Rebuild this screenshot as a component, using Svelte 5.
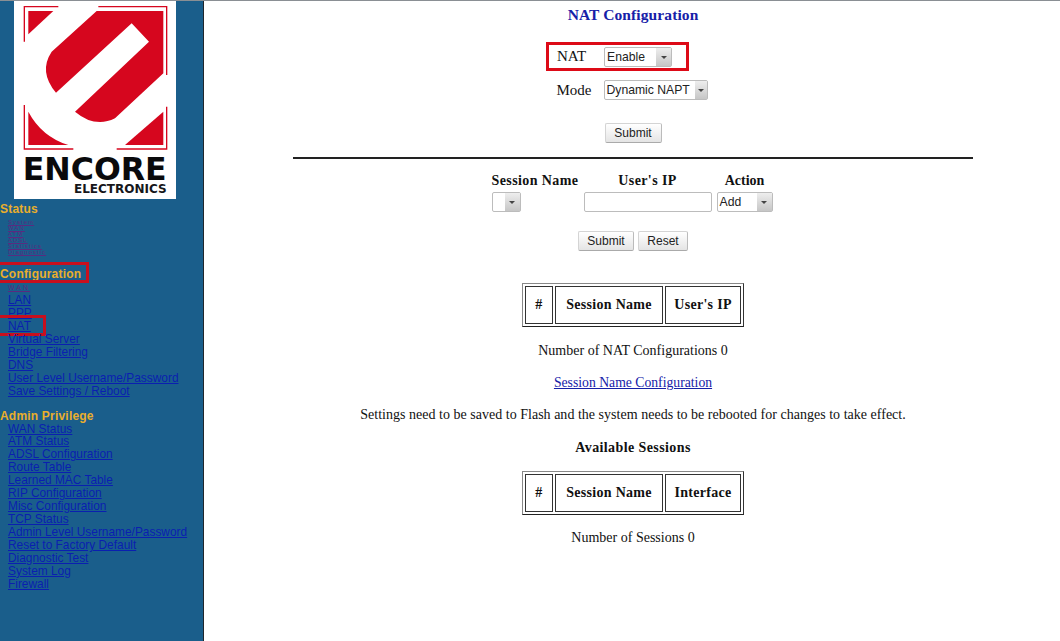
<script lang="ts">
  const statusLinks = ['System', 'WAN', 'ATM', 'ADSL', 'Statistics', 'Diagnostic'];
  const configLinks = ['LAN', 'PPP', 'NAT', 'Virtual Server', 'Bridge Filtering', 'DNS', 'User Level Username/Password', 'Save Settings / Reboot'];
  const adminLinks = ['WAN Status', 'ATM Status', 'ADSL Configuration', 'Route Table', 'Learned MAC Table', 'RIP Configuration', 'Misc Configuration', 'TCP Status', 'Admin Level Username/Password', 'Reset to Factory Default', 'Diagnostic Test', 'System Log', 'Firewall'];
</script>

<div class="page">
  <aside class="side">
    <div class="logo">
      <!-- viewBox is in 3x px so the traced points stay readable -->
      <svg viewBox="42 3 486 594" width="162" height="198">
        <g fill="#d6061e">
          <path d="M85 33 H160 L85 103 Z" />
          <path d="M290 33 H490 V220 L345 355 Q285 385 225 335 L447 125 L395 70 L168 278 Q115 215 155 155 Z" />
          <path d="M85 335 Q125 410 205 435 H85 Z" />
          <path d="M490 335 V435 H375 Z" />
        </g>
        <g fill="none" stroke="#d6061e" stroke-width="4">
          <path d="M73 125 V20 H175" />
          <path d="M295 20 H500 V225" />
          <path d="M73 315 V447 H220" />
          <path d="M350 447 H500 V320" />
        </g>
        <text class="enc" x="68" y="540" textLength="432" lengthAdjust="spacingAndGlyphs">ENCORE</text>
        <text class="ele" x="222" y="578" textLength="278" lengthAdjust="spacingAndGlyphs">ELECTRONICS</text>
      </svg>
    </div>

    <h4 class="head first">Status</h4>
    <ul class="links visited">
      {#each statusLinks as l}<li><a href="#s">{l}</a></li>{/each}
    </ul>

    <h4 class="head cfg"><span class="mark">Configuration</span></h4>
    <ul class="links">
      <li class="ghost"><a href="#w">WAN</a></li>
      {#each configLinks as l}
        <li><a href="#c" class:mark-nat={l === 'NAT'}>{l}</a></li>
      {/each}
    </ul>

    <h4 class="head adm">Admin Privilege</h4>
    <ul class="links">
      {#each adminLinks as l}<li><a href="#a">{l}</a></li>{/each}
    </ul>
  </aside>

  <main class="main">
    <h3 class="title">NAT Configuration</h3>

    <div class="natbox">
      <span class="lbl">NAT</span>
      <span class="sel" style="width: 68px">Enable<i class="arrow"></i></span>
    </div>
    <div class="moderow">
      <span class="lbl">Mode</span>
      <span class="sel" style="width: 104px">Dynamic NAPT<i class="arrow narrow"></i></span>
    </div>
    <button class="btn one">Submit</button>

    <hr class="rule" />

    <div class="addform">
      <div class="c1"><b>Session Name</b></div>
      <div class="c2"><b>User's IP</b></div>
      <div class="c3"><b>Action</b></div>
      <div class="ctl"><span class="sel" style="width: 29px"><i class="arrow"></i></span></div>
      <div class="ctl"><span class="input"></span></div>
      <div class="ctl"><span class="sel" style="width: 56px">Add<i class="arrow"></i></span></div>
    </div>
    <div class="btnrow">
      <button class="btn">Submit</button>
      <button class="btn">Reset</button>
    </div>

    <table class="grid first-table">
      <tbody><tr><th class="n">#</th><th class="sn">Session Name</th><th class="ip">User's IP</th></tr></tbody>
    </table>
    <p class="count1">Number of NAT Configurations 0</p>
    <p class="linkrow"><a href="#n">Session Name Configuration</a></p>
    <p class="note">Settings need to be saved to Flash and the system needs to be rebooted for changes to take effect.</p>
    <p class="avail"><b>Available Sessions</b></p>
    <table class="grid second-table">
      <tbody><tr><th class="n">#</th><th class="sn">Session Name</th><th class="if">Interface</th></tr></tbody>
    </table>
    <p class="count2">Number of Sessions 0</p>
  </main>
</div>

<style>
  :global(body) {
    margin: 0;
    background: #fff;
  }
  .page {
    display: flex;
    height: 641px;
    overflow: hidden;
    border-top: 1px solid #8a8f94;
    box-sizing: border-box;
  }
  .side {
    width: 203px;
    flex: none;
    background: #1a5e8b;
    border-right: 1px solid #20262b;
    font-family: "Liberation Sans", Arial, sans-serif;
    font-size: 12px;
    line-height: 13px;
  }
  .logo {
    margin-left: 14px;
    width: 162px;
    height: 198px;
    background: #fff;
    overflow: hidden;
  }
  .logo svg {
    display: block;
  }
  .enc {
    font: bold 96px "DejaVu Sans", sans-serif;
    fill: #0a0a0c;
  }
  .ele {
    font: bold 36px "DejaVu Sans", sans-serif;
    fill: #16161a;
  }
  .head {
    margin: 0;
    color: #e9ae2c;
    font-size: 12px;
    font-weight: bold;
    letter-spacing: 0.2px;
    line-height: 13px;
  }
  .first {
    margin-top: 4px;
  }
  .cfg {
    margin-top: 12px;
  }
  .adm {
    margin-top: 12px;
  }
  .mark {
    display: inline-block;
    position: relative;
  }
  .mark::after {
    content: "";
    position: absolute;
    left: -4px;
    top: -6px;
    width: 93px;
    height: 21px;
    box-sizing: border-box;
    border: 3px solid #c8101e;
  }
  .links {
    list-style: none;
    margin: 0;
    padding: 0 0 0 8px;
    font-size: 11.9px;
    line-height: 12.93px;
  }
  .links a {
    color: #0a1fb0;
    position: relative;
  }
  .visited {
    padding-top: 3px;
    height: 37px;
  }
  .visited li {
    height: 6px;
    line-height: 6px;
    font-size: 6px;
    letter-spacing: 1px;
  }
  .visited a {
    color: #5a2a80;
  }
  .ghost {
    height: 13px;
    line-height: 14px;
    font-size: 7px;
    letter-spacing: 2px;
  }
  .ghost a {
    color: #5a2a80;
  }
  .mark-nat::after {
    content: "";
    position: absolute;
    left: -11px;
    top: -4px;
    width: 49px;
    height: 21px;
    box-sizing: border-box;
    border: 3px solid #c8101e;
  }
  .main {
    width: 858px;
    flex: none;
    font-family: "Liberation Serif", "Times New Roman", serif;
    font-size: 14px;
    color: #111;
    text-align: center;
    display: flex;
    flex-direction: column;
    align-items: center;
  }
  .title {
    margin: 5px 0 0;
    color: #1620a8;
    font-size: 15.5px;
    line-height: 17px;
    font-weight: bold;
    letter-spacing: 0.1px;
  }
  .natbox {
    margin-top: 19px;
    width: 143px;
    height: 29px;
    box-sizing: border-box;
    border: 3px solid #dd0a17;
    display: flex;
    align-items: center;
    padding-left: 8px;
    margin-left: -31px;
  }
  .moderow {
    margin-top: 9px;
    display: flex;
    align-items: center;
    margin-left: -2px;
    height: 20px;
  }
  .lbl {
    width: 47px;
    text-align: left;
    font-size: 15px;
  }
  .sel {
    position: relative;
    display: inline-block;
    height: 20px;
    box-sizing: border-box;
    border: 1px solid #bcbcbc;
    border-radius: 2px;
    background: #fff;
    font: 12.2px/18px "Liberation Sans", Arial, sans-serif;
    color: #222;
    text-align: left;
    padding-left: 2px;
    white-space: nowrap;
  }
  .arrow {
    position: absolute;
    right: 0;
    top: 0;
    bottom: 0;
    width: 15px;
    background: linear-gradient(#eee, #c6c6c6);
  }
  .arrow.narrow {
    width: 12px;
  }
  .arrow::after {
    content: "";
    position: absolute;
    left: 50%;
    top: 8px;
    margin-left: -3px;
    border: 3px solid transparent;
    border-top: 3px solid #444;
    border-bottom: 0;
  }
  .btn {
    height: 20px;
    box-sizing: border-box;
    padding: 0 5px;
    border: 1px solid #d4d4d4;
    border-bottom-color: #aaa;
    border-right-color: #bbb;
    border-radius: 2px;
    background: linear-gradient(#fff, #e4e4e4);
    font: 12px "Liberation Sans", Arial, sans-serif;
    color: #222;
  }
  .one {
    margin-top: 23px;
    width: 57px;
  }
  .rule {
    width: 680px;
    height: 2px;
    margin: 14px 0 0;
    border: 0;
    background: #222;
  }
  .addform {
    display: grid;
    grid-template-columns: 92px 133px 56px;
    margin-top: 14px;
    margin-left: -2px;
    line-height: 15px;
  }
  .c1 {
    text-align: left;
    letter-spacing: 0.4px;
  }
  .c2 {
    padding-right: 5px;
    letter-spacing: 0.4px;
  }
  .ctl {
    margin-top: 4px;
    display: flex;
    height: 20px;
  }
  .input {
    display: block;
    width: 128px;
    height: 20px;
    box-sizing: border-box;
    border: 1px solid #bcbcbc;
    border-radius: 2px;
    background: #fff;
  }
  .btnrow {
    display: flex;
    gap: 4px;
    margin-top: 19px;
  }
  .btnrow .btn {
    width: 56px;
  }
  .btnrow .btn + .btn {
    width: 50px;
  }
  .grid {
    border-collapse: separate;
    border-spacing: 2px;
    border: 1px solid #888;
    border-right-color: #333;
    border-bottom-color: #222;
  }
  .grid th {
    height: 36px;
    padding: 0;
    border: 1px solid #333;
    font-size: 14px;
    font-weight: bold;
    letter-spacing: 0.3px;
  }
  .first-table {
    margin-top: 32px;
  }
  .n {
    width: 26px;
  }
  .sn {
    width: 106px;
  }
  .ip {
    width: 74px;
  }
  .if {
    width: 74px;
  }
  p {
    margin: 0;
    line-height: 16px;
  }
  .count1 {
    margin-top: 16px;
  }
  .linkrow {
    margin-top: 16px;
  }
  .linkrow a {
    color: #1620a8;
    font-size: 13.7px;
  }
  .note {
    margin-top: 16px;
    letter-spacing: 0.02px;
  }
  .avail {
    margin-top: 17px;
    letter-spacing: 0.4px;
  }
  .second-table {
    margin-top: 15px;
  }
  .count2 {
    margin-top: 15px;
  }
</style>
